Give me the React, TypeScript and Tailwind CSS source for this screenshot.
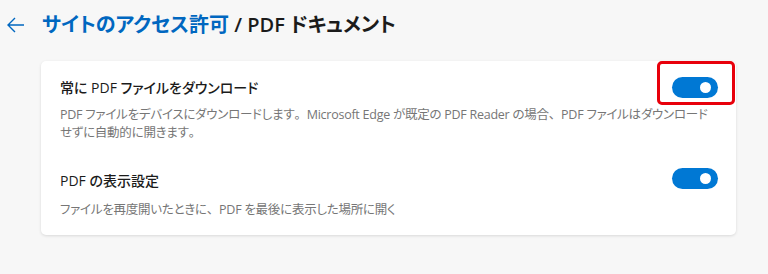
import React from 'react';

const font = { fontFamily: '"Segoe UI", "Open Sans", "Noto Sans CJK JP", sans-serif' };

// full-width punctuation (no proportional kerning)
function P({ c }: { c: string }) {
    return <span className="[font-feature-settings:normal]">{c}</span>;
}

function Toggle() {
    return (
        <div className="relative w-[46px] h-[21px] rounded-full bg-[#0078d4] shrink-0">
            <span className="absolute right-[7px] top-[5px] w-[11px] h-[11px] rounded-full bg-white" />
        </div>
    );
}

export default function App() {
    return (
        <div className="w-[768px] h-[274px] bg-[#f7f7f7] overflow-hidden [font-feature-settings:'palt']" style={font}>
            {/* Header */}
            <div className="flex items-center h-[50px] pl-[7px]">
                <svg width="18" height="16" viewBox="0 0 18 16" fill="none" className="mr-[17px]">
                    <path d="M8 1 L1 8 L8 15 M1 8 H17" stroke="#0067c0" strokeWidth="1.4" />
                </svg>
                <h1 className="text-[20px] font-semibold">
                    <span className="text-[#0067c0]">サイトのアクセス許可</span>
                    <span className="text-[#1b1b1b]"> / PDF ドキュメント</span>
                </h1>
            </div>

            {/* Card */}
            <div className="ml-[41px] mt-[11px] w-[695px] bg-white rounded-[5px] shadow-[0_1px_3px_rgba(0,0,0,0.12)] px-[19px] pt-[16px] pb-[16px]">
                <div className="flex items-start justify-between">
                    <div className="text-[14px] leading-[22px] text-[#1b1b1b] font-medium">常に PDF ファイルをダウンロード</div>
                    <div className="relative mr-[-1px]">
                        <Toggle />
                        {/* highlight */}
                        <div className="absolute left-[-15px] top-[-16px] w-[78px] h-[44px] border-[3px] border-[#e8000b] rounded-[5px]" />
                    </div>
                </div>
                <p className="mt-[7px] text-[12.5px] leading-[18px] tracking-[-0.25px] text-[#767676]">
                    PDF ファイルをデバイスにダウンロードします<P c="。" />Microsoft Edge が既定の PDF Reader の場合<P c="、" />PDF ファイルはダウンロードせずに自動的に開きます<P c="。" />
                </p>

                <div className="flex items-start justify-between mt-[28px]">
                    <div className="text-[14px] leading-[22px] text-[#1b1b1b] font-medium">PDF の表示設定</div>
                    <div className="-mt-[2px] mr-[-1px]">
                        <Toggle />
                    </div>
                </div>
                <p className="mt-[9px] text-[12.5px] leading-[18px] tracking-[-0.25px] text-[#767676]">
                    ファイルを再度開いたときに<P c="、" />PDF を最後に表示した場所に開く
                </p>
            </div>
        </div>
    );
}
